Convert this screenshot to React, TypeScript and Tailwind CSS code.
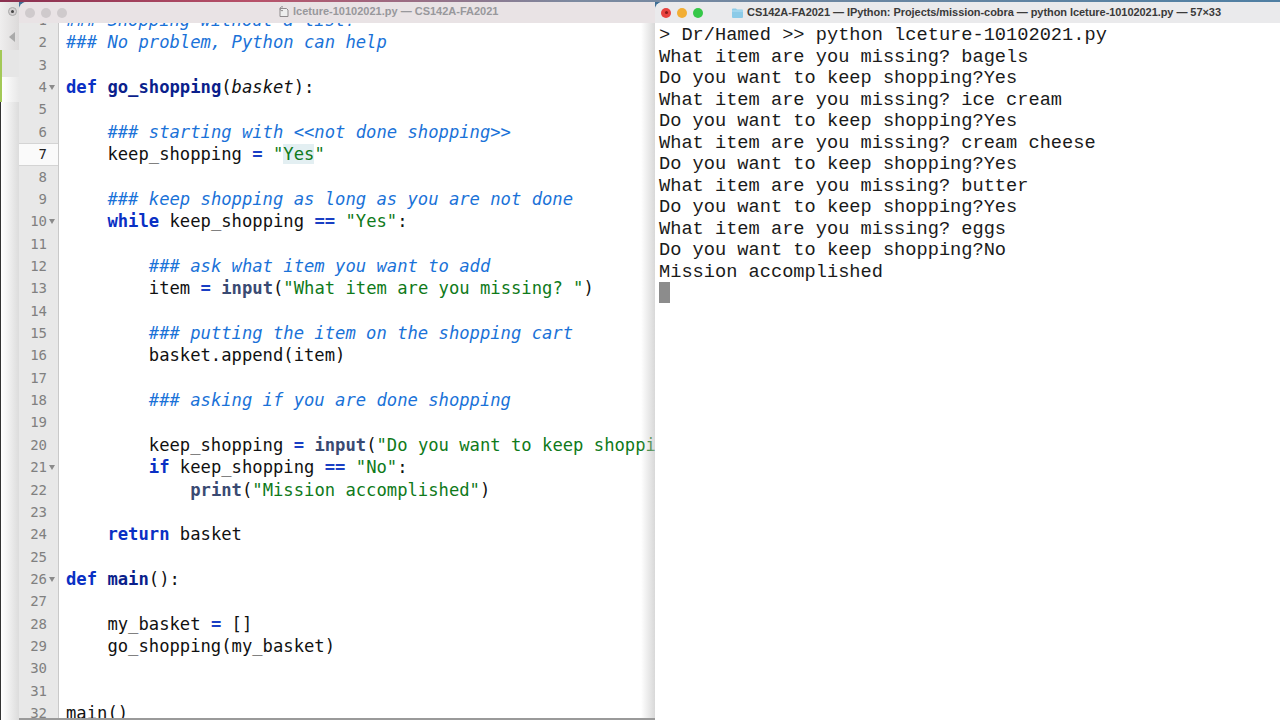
const KW = "text-[#0a30c4] font-bold";
const FN = "text-[#0b1f8c] font-bold";
const BI = "text-[#3a4a72] font-bold";
const CM = "text-[#1a72d8] italic";
const ST = "text-[#0f7a1a]";
const OP = "text-[#1a3fc4] font-bold";

type Span = [string, string?];

// one entry per editor line, [text, class]
const code: Span[][] = [
  [["### Shopping without a list?", CM]],
  [["### No problem, Python can help", CM]],
  [],
  [["def", KW], [" "], ["go_shopping", FN], ["("], ["basket", "italic"], ["):"]],
  [],
  [["    "], ["### starting with <<not done shopping>>", CM]],
  [["    keep_shopping "], ["=", OP], [" "], ['"', ST], ["Yes", ST + " bg-[#e3eff2]"], ['"', ST]],
  [],
  [["    "], ["### keep shopping as long as you are not done", CM]],
  [["    "], ["while", KW], [" keep_shopping "], ["==", OP], [" "], ['"Yes"', ST], [":"]],
  [],
  [["        "], ["### ask what item you want to add", CM]],
  [["        item "], ["=", OP], [" "], ["input", BI], ["("], ['"What item are you missing? "', ST], [")"]],
  [],
  [["        "], ["### putting the item on the shopping cart", CM]],
  [["        basket.append(item)"]],
  [],
  [["        "], ["### asking if you are done shopping", CM]],
  [],
  [["        keep_shopping "], ["=", OP], [" "], ["input", BI], ["("], ['"Do you want to keep shopping?"', ST], [")"]],
  [["        "], ["if", KW], [" keep_shopping "], ["==", OP], [" "], ['"No"', ST], [":"]],
  [["            "], ["print", BI], ["("], ['"Mission accomplished"', ST], [")"]],
  [],
  [["    "], ["return", KW], [" basket"]],
  [],
  [["def", KW], [" "], ["main", FN], ["():"]],
  [],
  [["    my_basket "], ["=", OP], [" []"]],
  [["    go_shopping(my_basket)"]],
  [],
  [],
  [["main()"]],
];

const foldLines = [4, 10, 21, 26];

const terminal = [
  "> Dr/Hamed >> python lceture-10102021.py",
  "What item are you missing? bagels",
  "Do you want to keep shopping?Yes",
  "What item are you missing? ice cream",
  "Do you want to keep shopping?Yes",
  "What item are you missing? cream cheese",
  "Do you want to keep shopping?Yes",
  "What item are you missing? butter",
  "Do you want to keep shopping?Yes",
  "What item are you missing? eggs",
  "Do you want to keep shopping?No",
  "Mission accomplished",
];

function Light({ color, dot }: { color: string; dot?: boolean }) {
  return (
    <span className={`w-[10px] h-[10px] rounded-full flex items-center justify-center ${color}`}>
      {dot && <span className="w-[3px] h-[3px] rounded-full bg-[#8c1a1a]" />}
    </span>
  );
}

function DocIcon() {
  return (
    <svg width="13" height="13" viewBox="0 0 13 13" fill="none" className="mr-[3px]">
      <path d="M3 3.5h6.5l1.5 1.5v6.5H3z" fill="#eee" stroke="#8f8b8d" />
      <path d="M6 5.5a2 2 0 1 1 0-3.5" stroke="#8f8b8d" />
    </svg>
  );
}

function FolderIcon() {
  return (
    <svg width="13" height="12" viewBox="0 0 13 12">
      <path d="M1 2.5a1 1 0 0 1 1-1h3l1 1h5a1 1 0 0 1 1 1V10a1 1 0 0 1-1 1H2a1 1 0 0 1-1-1z" fill="#8ccbe8" />
      <path d="M1 4h11" stroke="#b5e0f3" />
    </svg>
  );
}

function Editor() {
  return (
    <div className="relative w-[636px] h-full rounded-tl-[8px] bg-white flex flex-col overflow-hidden border-b-2 border-b-[#9a9a9a]">
      <div className="h-[21px] shrink-0 bg-[#e9e3e5] flex items-center relative z-10">
        <div className="flex items-center gap-[6px] pl-[6px]">
          <Light color="bg-[#cfcacc]" />
          <Light color="bg-[#cfcacc]" />
          <Light color="bg-[#cfcacc]" />
        </div>
        <div className="ml-[210px] -mt-[3px] flex items-center text-[11px] font-bold text-[#98989c] font-['Liberation_Sans',sans-serif]">
          <DocIcon />
          lceture-10102021.py — CS142A-FA2021
        </div>
      </div>
      <div className="flex-1 flex min-h-0 font-['DejaVu_Sans_Mono',monospace] text-[17.2px] leading-[22.37px]">
        <div className="w-[40px] shrink-0 bg-[#e8e8e8] border-r border-[#c9c9c9] overflow-hidden">
          <div className="-mt-[14px]">
            {code.map((_, i) => (
              <div
                key={i}
                className={`relative h-[22.37px] text-right pr-[11px] text-[14px] ${i === 6 ? "bg-[#fafafa] text-[#222] border-y border-[#d4d4d4] leading-[20.37px]" : "text-[#808080]"}`}
              >
                {i + 1}
                {foldLines.includes(i + 1) && (
                  <span className="absolute right-[3px] top-[9px] w-0 h-0 border-x-[3px] border-x-transparent border-t-[5px] border-t-[#8a8a8a]" />
                )}
              </div>
            ))}
          </div>
        </div>
        <div className="flex-1 overflow-hidden pl-[7px] text-[#111]">
          <div className="-mt-[14px]">
            {code.map((spans, i) => (
              <div key={i} className="h-[22.37px] whitespace-pre">
                {spans.map(([text, cls], j) => (
                  <span key={j} className={cls}>
                    {text}
                  </span>
                ))}
              </div>
            ))}
          </div>
        </div>
      </div>
      {/* shadow the terminal window casts over the editor */}
      <div className="absolute right-0 top-[21px] bottom-0 w-[14px] bg-[linear-gradient(to_right,rgba(190,190,190,0),rgba(190,190,190,0.6))]" />
    </div>
  );
}

function Sidebar() {
  return (
    <div className="w-[19px] h-full shrink-0 bg-[#e9e9e9] flex flex-col">
      <div className="h-[48px] bg-[linear-gradient(to_right,#efeeee,#dcdada)] relative">
        <span className="absolute left-[8px] top-[5px] w-[9px] h-[9px] rounded-full bg-[#d3d0d1] border border-[#a9a9a9] flex items-center justify-center">
          <span className="w-[3px] h-[3px] rounded-full bg-[#444]" />
        </span>
        <span className="absolute left-[9px] top-[30px] w-0 h-0 border-y-[5px] border-y-transparent border-r-[6px] border-r-[#aaa]" />
      </div>
      <div className="h-[52px] border-l-2 border-l-[#a3c957] flex flex-col">
        <div className="h-[27px] bg-[#e6e6e6]" />
        <div className="flex-1 bg-[linear-gradient(to_right,#fff,#e8e8e8)]" />
      </div>
      <div className="flex-1 border-l border-l-[#333] bg-[linear-gradient(to_right,#fff,#dcdcdc)]" />
    </div>
  );
}

function Terminal() {
  return (
    <div className="flex-1 h-full rounded-tl-[8px] bg-white flex flex-col overflow-hidden">
      <div className="h-[21px] shrink-0 bg-[#eaeaec] flex items-center">
        <div className="flex items-center gap-[6px] pl-[6px]">
          <Light color="bg-[#e8433f]" dot />
          <Light color="bg-[#f2ae34]" />
          <Light color="bg-[#35c848]" />
        </div>
        <div className="ml-[28px] flex items-center gap-[3px] text-[11px] tracking-[-0.06px] font-bold text-[#3a3a3a] font-['Liberation_Sans',sans-serif]">
          <FolderIcon />
          CS142A-FA2021 — IPython: Projects/mission-cobra — python lceture-10102021.py — 57×33
        </div>
      </div>
      <div className="flex-1 pl-[4px] pt-[2px] font-['Liberation_Mono',monospace] text-[18.67px] leading-[21.55px] text-[#1a1a1a]">
        {terminal.map((line) => (
          <div key={line} className="whitespace-pre h-[21.55px]">
            {line}
          </div>
        ))}
        <div className="w-[11px] h-[21px] -mt-[2px] bg-[#8c8c8c]" />
      </div>
    </div>
  );
}

export default function App() {
  return (
    <div className="w-[1280px] h-[720px] overflow-hidden bg-[#3f6f96] flex flex-col">
      <div className="h-[2px] shrink-0 bg-[linear-gradient(to_right,#8a2f4f,#b8526a_20%,#7c8aa0_45%,#4f7fa3)]" />
      <div className="flex-1 min-h-0 flex">
        <Sidebar />
        <Editor />
        <Terminal />
      </div>
    </div>
  );
}
